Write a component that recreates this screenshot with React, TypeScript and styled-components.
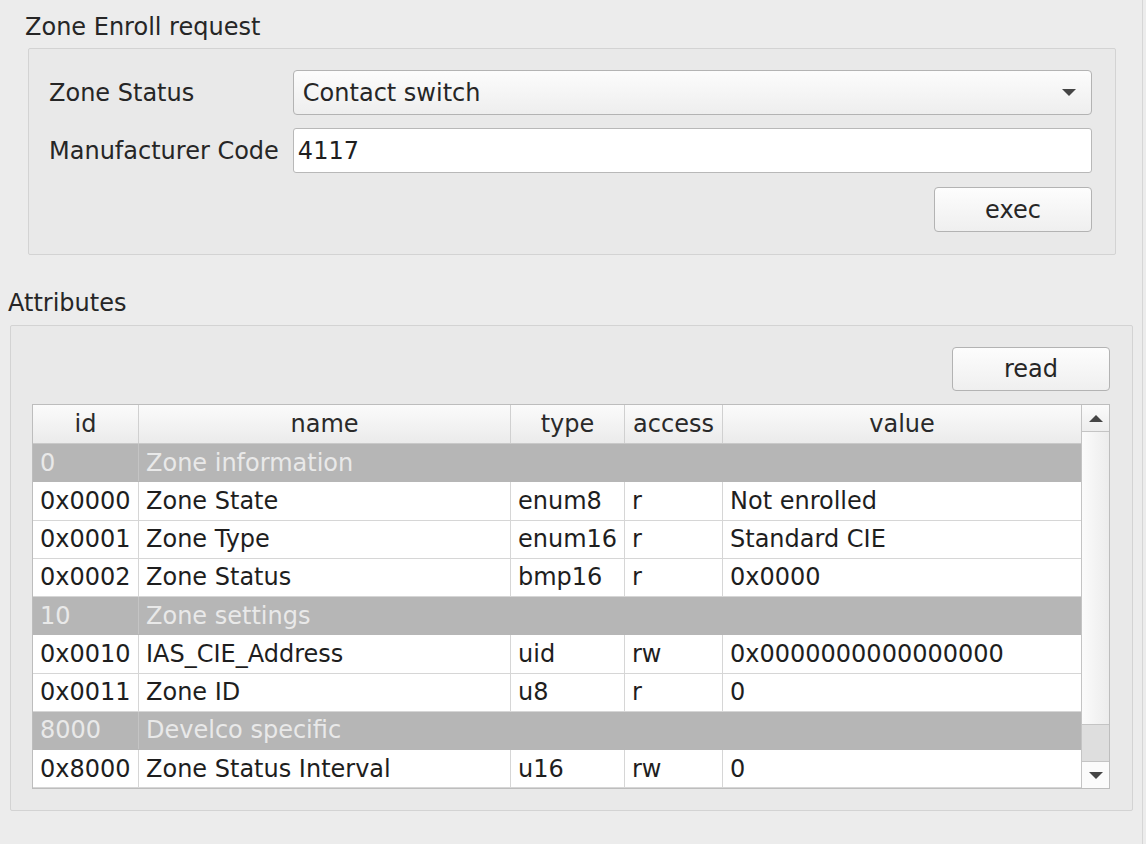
import styled, { createGlobalStyle } from "styled-components";

const GlobalStyle = createGlobalStyle`
  html, body {
    margin: 0;
    padding: 0;
    background: #ececec;
  }
  body {
    font-family: "DejaVu Sans", "Liberation Sans", sans-serif;
    font-size: 24px;
    color: #2b2b2b;
  }
`;

const Window = styled.div`
  width: 1143px;
  height: 844px;
  box-sizing: border-box;
  border-right: 1px solid #d6d6d6;
  background: #ececec;
  padding-top: 12px;
  overflow: hidden;
`;

const SectionTitle = styled.div<{ $indent: number; $gap: number }>`
  height: 30px;
  line-height: 30px;
  padding-left: ${(p) => p.$indent}px;
  margin-top: ${(p) => p.$gap}px;
  color: #262626;
`;

const GroupBox = styled.div<{ $left: number; $right: number; $top: number }>`
  margin: ${(p) => p.$top}px ${(p) => p.$right}px 0 ${(p) => p.$left}px;
  border: 1px solid #d3d3d3;
  border-radius: 2px;
  background: #e9e9e9;
`;

const Form = styled.div`
  display: grid;
  grid-template-columns: auto 1fr;
  column-gap: 14px;
  row-gap: 13px;
  align-items: center;
  padding: 21px 23px 22px 20px;
`;

const Label = styled.span`
  color: #262626;
  white-space: nowrap;
`;

const Combo = styled.div`
  height: 45px;
  box-sizing: border-box;
  border: 1px solid #b3b3b3;
  border-radius: 4px;
  background: linear-gradient(#fcfcfc, #eeeeee);
  display: flex;
  align-items: center;
  justify-content: space-between;
  padding: 0 15px 0 9px;
  color: #262626;
`;

const LineEdit = styled.input`
  height: 45px;
  width: 100%;
  box-sizing: border-box;
  border: 1px solid #b8b8b8;
  border-radius: 3px;
  background: #ffffff;
  padding: 0 4px;
  font: inherit;
  color: #1e1e1e;
  outline: none;
`;

const PushButton = styled.button<{ $height: number }>`
  width: 158px;
  height: ${(p) => p.$height}px;
  box-sizing: border-box;
  border: 1px solid #b3b3b3;
  border-radius: 4px;
  background: linear-gradient(#fdfdfd, #efefef);
  font: inherit;
  color: #262626;
  padding: 0;
`;

const ExecCell = styled.div`
  grid-column: 2;
  justify-self: end;
  margin-top: 1px;
`;

const AttrBody = styled.div`
  padding: 21px 22px 21px 21px;
`;

const Toolbar = styled.div`
  display: flex;
  justify-content: flex-end;
  margin-bottom: 13px;
`;

const TableView = styled.div`
  display: flex;
  border: 1px solid #bdbdbd;
  background: #ffffff;
`;

const TableArea = styled.div`
  flex: 1;
  display: flex;
  flex-direction: column;
`;

const columns = "106px 372px 114px 98px 1fr";

const HeaderRow = styled.div`
  display: grid;
  grid-template-columns: ${columns};
  height: 38px;
  border-bottom: 1px solid #c9c9c9;
  background: linear-gradient(#fbfbfb, #ebebeb);
`;

const HeaderCell = styled.div<{ $last?: boolean }>`
  border-right: ${(p) => (p.$last ? "none" : "1px solid #d0d0d0")};
  display: flex;
  align-items: center;
  justify-content: center;
  color: #2a2a2a;
`;

const Row = styled.div<{ $group?: boolean }>`
  display: grid;
  grid-template-columns: ${columns};
  height: 38.25px;
  box-sizing: border-box;
  border-bottom: 1px solid ${(p) => (p.$group ? "#b6b6b6" : "#d6d6d6")};
  background: ${(p) => (p.$group ? "#b6b6b6" : "#ffffff")};
  color: ${(p) => (p.$group ? "#e9e9e9" : "#1e1e1e")};
`;

const Cell = styled.div<{ $group?: boolean; $span?: boolean; $last?: boolean }>`
  grid-column: ${(p) => (p.$span ? "2 / -1" : "auto")};
  border-right: ${(p) =>
    p.$last || p.$span ? "none" : `1px solid ${p.$group ? "#c4c4c4" : "#d6d6d6"}`};
  padding-left: 7px;
  display: flex;
  align-items: center;
  white-space: nowrap;
  overflow: hidden;
`;

const ScrollBar = styled.div`
  width: 27px;
  border-left: 1px solid #c4c4c4;
  display: flex;
  flex-direction: column;
`;

const ScrollButton = styled.div<{ $up?: boolean }>`
  height: 27px;
  box-sizing: border-box;
  display: flex;
  align-items: center;
  justify-content: center;
  background: ${(p) => (p.$up ? "linear-gradient(#fbfbfb, #ededed)" : "#fbfbfb")};
  border-bottom: ${(p) => (p.$up ? "1px solid #c4c4c4" : "none")};
  border-top: ${(p) => (p.$up ? "none" : "1px solid #c4c4c4")};
`;

const ScrollHandle = styled.div`
  height: 293px;
  box-sizing: border-box;
  border-bottom: 1px solid #c4c4c4;
  background: linear-gradient(to right, #fbfbfb, #ececec);
`;

const ScrollTrack = styled.div`
  flex: 1;
  background: #dedede;
`;

const Arrow = ({ up }: { up?: boolean }) => (
  <svg width="14" height="7" viewBox="0 0 14 7">
    <path d={up ? "M0 7 L7 0 L14 7 Z" : "M0 0 L14 0 L7 7 Z"} fill="#454545" />
  </svg>
);

type Attr = {
  id: string;
  name: string;
  type?: string;
  access?: string;
  value?: string;
  group?: boolean;
};

const attributes: Attr[] = [
  { id: "0", name: "Zone information", group: true },
  { id: "0x0000", name: "Zone State", type: "enum8", access: "r", value: "Not enrolled" },
  { id: "0x0001", name: "Zone Type", type: "enum16", access: "r", value: "Standard CIE" },
  { id: "0x0002", name: "Zone Status", type: "bmp16", access: "r", value: "0x0000" },
  { id: "10", name: "Zone settings", group: true },
  { id: "0x0010", name: "IAS_CIE_Address", type: "uid", access: "rw", value: "0x0000000000000000" },
  { id: "0x0011", name: "Zone ID", type: "u8", access: "r", value: "0" },
  { id: "8000", name: "Develco specific", group: true },
  { id: "0x8000", name: "Zone Status Interval", type: "u16", access: "rw", value: "0" },
];

const headers = ["id", "name", "type", "access", "value"];

export default function App() {
  return (
    <Window>
      <GlobalStyle />
      <SectionTitle $indent={25} $gap={0}>
        Zone Enroll request
      </SectionTitle>
      <GroupBox $left={28} $right={26} $top={6}>
        <Form>
          <Label>Zone Status</Label>
          <Combo>
            <span>Contact switch</span>
            <Arrow />
          </Combo>
          <Label>Manufacturer Code</Label>
          <LineEdit defaultValue="4117" />
          <ExecCell>
            <PushButton $height={45}>exec</PushButton>
          </ExecCell>
        </Form>
      </GroupBox>

      <SectionTitle $indent={8} $gap={33}>
        Attributes
      </SectionTitle>
      <GroupBox $left={10} $right={9} $top={7}>
        <AttrBody>
          <Toolbar>
            <PushButton $height={44}>read</PushButton>
          </Toolbar>
          <TableView>
            <TableArea>
              <HeaderRow>
                {headers.map((h, i) => (
                  <HeaderCell key={h} $last={i === headers.length - 1}>
                    {h}
                  </HeaderCell>
                ))}
              </HeaderRow>
              {attributes.map((a) =>
                a.group ? (
                  <Row key={a.id} $group>
                    <Cell $group>{a.id}</Cell>
                    <Cell $group $span>
                      {a.name}
                    </Cell>
                  </Row>
                ) : (
                  <Row key={a.id}>
                    <Cell>{a.id}</Cell>
                    <Cell>{a.name}</Cell>
                    <Cell>{a.type}</Cell>
                    <Cell>{a.access}</Cell>
                    <Cell $last>{a.value}</Cell>
                  </Row>
                )
              )}
            </TableArea>
            <ScrollBar>
              <ScrollButton $up>
                <Arrow up />
              </ScrollButton>
              <ScrollHandle />
              <ScrollTrack />
              <ScrollButton>
                <Arrow />
              </ScrollButton>
            </ScrollBar>
          </TableView>
        </AttrBody>
      </GroupBox>
    </Window>
  );
}
